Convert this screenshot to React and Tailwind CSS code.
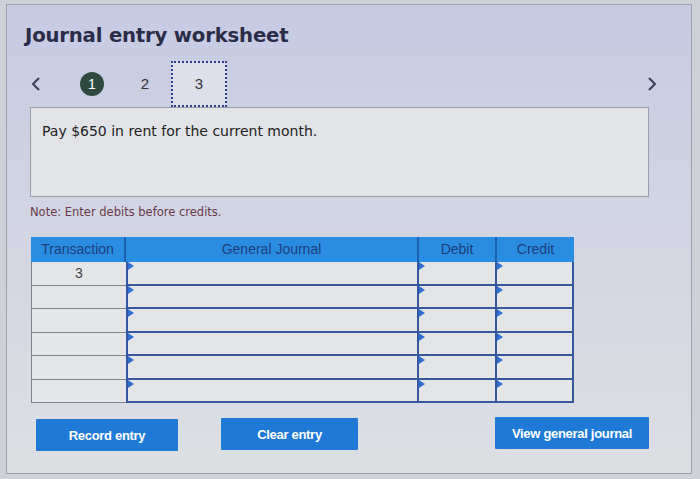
import React from "react";

const Tri = () => (
  <span className="absolute left-0 top-0 w-0 h-0 border-t-[4px] border-b-[4px] border-l-[6px] border-t-transparent border-b-transparent border-l-[#2f6fd0]" />
);

export default function App() {
  const rows = [0, 1, 2, 3, 4, 5];
  return (
    <div className="w-[700px] h-[479px] bg-[#cfd1d8] pt-[4px] pl-[6px] overflow-hidden" style={{ fontFamily: '"DejaVu Sans", Verdana, sans-serif' }}>
      <div className="w-[686px] h-[470px] border border-[#9ea2ae] bg-gradient-to-b from-[#c6cae4] via-[#d3d6e2] to-[#dcdfe2] flex flex-col">
        <h1 className="pl-[18px] pt-[19px] text-[19.7px] leading-[24px] font-bold text-[#2a2c48] tracking-[-0.2px]">
          Journal entry worksheet
        </h1>
        <div className="flex items-center h-[46px] mt-[13px]">
          <div className="pl-[22px]">
            <svg width="14" height="18" viewBox="0 0 14 18"><path d="M10 3 L4 9 L10 15" fill="none" stroke="#3b3f5a" strokeWidth="2" /></svg>
          </div>
          <div className="ml-[37px] w-[24px] h-[24px] rounded-full bg-[#2e4a40] text-white text-[14px] flex items-center justify-center" style={{ fontFamily: '"Liberation Sans", Arial, sans-serif' }}>1</div>
          <div className="ml-[31px] w-[20px] text-center text-[15px] text-[#333]" style={{ fontFamily: '"Liberation Sans", Arial, sans-serif' }}>2</div>
          <div className="ml-[16px] w-[56px] h-[46px] border-2 border-dotted border-[#2b3f8c] bg-[#dde0ea] flex items-center justify-center text-[15px] text-[#333]" style={{ fontFamily: '"Liberation Sans", Arial, sans-serif' }}>3</div>
          <div className="flex-1" />
          <div className="pr-[32px] pt-[0px]">
            <svg width="14" height="18" viewBox="0 0 14 18"><path d="M4 3 L10 9 L4 15" fill="none" stroke="#3b3f5a" strokeWidth="2" /></svg>
          </div>
        </div>
        <div className="ml-[23px] w-[619px] h-[90px] border border-[#9a9ea6] bg-[#e1e3e6] px-[11px] pt-[13px] text-[14px] text-[#222]">
          Pay $650 in rent for the current month.
        </div>
        <div className="ml-[23px] mt-[7px] text-[11.5px] text-[#6a3a4c]">Note: Enter debits before credits.</div>
        <div className="ml-[24px] mt-[16px] w-[543px]" style={{ fontFamily: '"Liberation Sans", Arial, sans-serif' }}>
          <div className="flex h-[25px] bg-[#2b8de2] text-[14px] text-[#1d3d7e]">
            <div className="w-[95px] flex items-center justify-center border-r-2 border-[#1f5fb0]">Transaction</div>
            <div className="w-[293px] flex items-center justify-center border-r-2 border-[#1f5fb0]">General Journal</div>
            <div className="w-[78px] flex items-center justify-center border-r-2 border-[#1f5fb0]">Debit</div>
            <div className="w-[77px] flex items-center justify-center">Credit</div>
          </div>
          {rows.map((r) => (
            <div key={r} className="flex h-[23.5px] bg-[#e3e5e6]">
              <div className="w-[95px] flex items-center justify-center text-[14px] text-[#444] border-l border-b border-[#808387]">
                {r === 0 ? "3" : ""}
              </div>
              <div className="relative w-[293px] border-2 border-t-0 border-[#3457a0]"><Tri /></div>
              <div className="relative w-[78px] border-2 border-t-0 border-l-0 border-[#3457a0]"><Tri /></div>
              <div className="relative w-[77px] border-2 border-t-0 border-l-0 border-[#3457a0]"><Tri /></div>
            </div>
          ))}
        </div>
        <div className="flex items-start mt-[15px]" style={{ fontFamily: '"Liberation Sans", Arial, sans-serif' }}>
          <button className="ml-[29px] mt-[1px] w-[142px] h-[32px] bg-[#1f7ad7] text-white text-[13px] font-bold tracking-[-0.3px] rounded-[1px]">Record entry</button>
          <button className="ml-[43px] w-[137px] h-[32px] bg-[#1f7ad7] text-white text-[13px] font-bold tracking-[-0.3px] rounded-[1px]">Clear entry</button>
          <button className="ml-[137px] -mt-[1px] w-[154px] h-[32px] bg-[#1f7ad7] text-white text-[13px] font-bold tracking-[-0.3px] rounded-[1px]">View general journal</button>
        </div>
      </div>
    </div>
  );
}
